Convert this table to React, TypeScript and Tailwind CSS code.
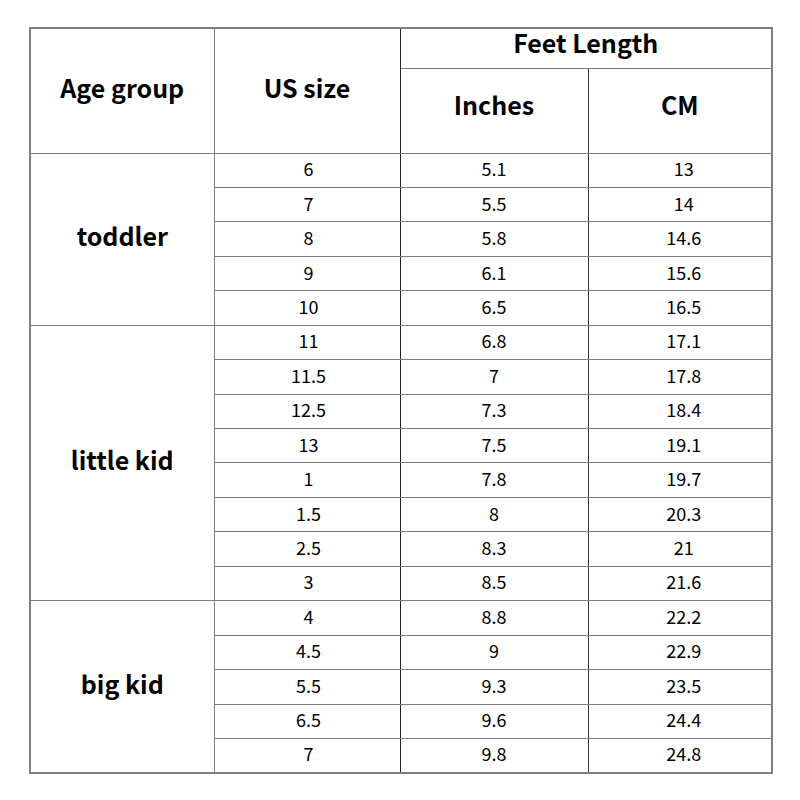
import React from "react";

type Group = { name: string; rows: [string, string, string][] };

const groups: Group[] = [
  {
    name: "toddler",
    rows: [
      ["6", "5.1", "13"],
      ["7", "5.5", "14"],
      ["8", "5.8", "14.6"],
      ["9", "6.1", "15.6"],
      ["10", "6.5", "16.5"],
    ],
  },
  {
    name: "little kid",
    rows: [
      ["11", "6.8", "17.1"],
      ["11.5", "7", "17.8"],
      ["12.5", "7.3", "18.4"],
      ["13", "7.5", "19.1"],
      ["1", "7.8", "19.7"],
      ["1.5", "8", "20.3"],
      ["2.5", "8.3", "21"],
      ["3", "8.5", "21.6"],
    ],
  },
  {
    name: "big kid",
    rows: [
      ["4", "8.8", "22.2"],
      ["4.5", "9", "22.9"],
      ["5.5", "9.3", "23.5"],
      ["6.5", "9.6", "24.4"],
      ["7", "9.8", "24.8"],
    ],
  },
];

const font = { fontFamily: '"Noto Sans CJK SC", "Noto Sans", sans-serif' };

export default function App() {
  return (
    <div className="h-[800px] w-[800px] bg-white pl-[29px] pt-[27px]" style={font}>
      <table className="w-[742px] table-fixed border-collapse border-2 border-[#7f7f7f] text-center text-black">
        <colgroup>
          <col className="w-[184px]" />
          <col className="w-[186px]" />
          <col className="w-[188px]" />
          <col className="w-[184px]" />
        </colgroup>
        <thead>
          <tr className="h-[40px]">
            <th rowSpan={2} className="border border-[#7f7f7f] pb-[6px] text-[25px] font-semibold">
              Age group
            </th>
            <th rowSpan={2} className="border border-[#7f7f7f] border-r-[#222] pb-[6px] text-[25px] font-semibold">
              US size
            </th>
            <th colSpan={2} className="border border-[#7f7f7f] border-l-[#222] pb-[12px] text-[25px] font-semibold leading-none">
              Feet Length
            </th>
          </tr>
          <tr className="h-[85px]">
            <th className="border border-[#7f7f7f] border-l-[#222] border-r-[#333] pb-[12px] text-[25px] font-semibold">Inches</th>
            <th className="border border-[#7f7f7f] pb-[12px] text-[25px] font-semibold">CM</th>
          </tr>
        </thead>
        <tbody className="text-[18px]">
          {groups.map((g) =>
            g.rows.map((r, i) => (
              <tr key={g.name + i} className="h-[34.44px]">
                {i === 0 && (
                  <td
                    rowSpan={g.rows.length}
                    className="border border-[#7f7f7f] pb-[6px] text-[25px] font-semibold"
                  >
                    {g.name}
                  </td>
                )}
                <td className="border border-[#7f7f7f] border-r-[#222] pb-[4px] pl-[3px] leading-none">{r[0]}</td>
                <td className="border border-[#7f7f7f] border-l-[#222] border-r-[#333] pb-[4px] leading-none">{r[1]}</td>
                <td className="border border-[#7f7f7f] pb-[4px] pl-[8px] leading-none">{r[2]}</td>
              </tr>
            ))
          )}
        </tbody>
      </table>
    </div>
  );
}
